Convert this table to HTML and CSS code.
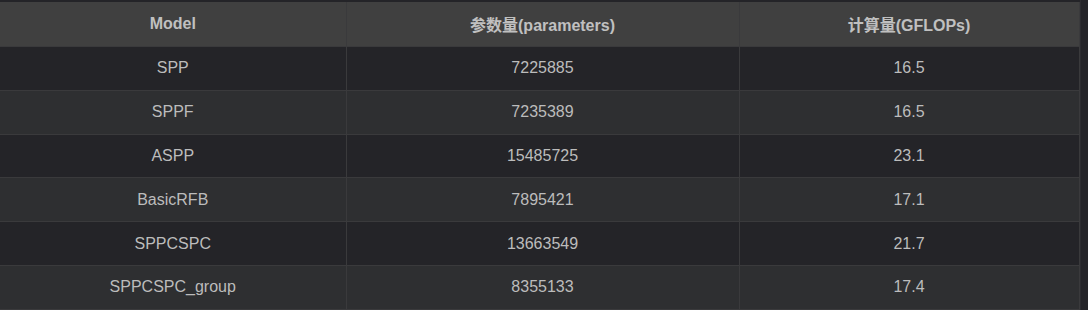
FILE: index.html
```html
<!DOCTYPE html>
<html>
<head>
<meta charset="utf-8">
<link rel="stylesheet" href="styles.css">
</head>
<body>
<div class="wrap">
<table class="tbl">
<colgroup><col class="c1"><col class="c2"><col class="c3"></colgroup>
<thead>
<tr><th>Model</th><th>参数量(parameters)</th><th>计算量(GFLOPs)</th></tr>
</thead>
<tbody>
<tr><td>SPP</td><td>7225885</td><td>16.5</td></tr>
<tr><td>SPPF</td><td>7235389</td><td>16.5</td></tr>
<tr><td>ASPP</td><td>15485725</td><td>23.1</td></tr>
<tr><td>BasicRFB</td><td>7895421</td><td>17.1</td></tr>
<tr><td>SPPCSPC</td><td>13663549</td><td>21.7</td></tr>
<tr><td>SPPCSPC_group</td><td>8355133</td><td>17.4</td></tr>
</tbody>
</table>
</div>
</body>
</html>
```
FILE: styles.css
```css
html, body {
  margin: 0;
  padding: 0;
  background: #242428;
}
.wrap {
  padding-top: 2px;
  width: 1080px;
  border-right: 1px solid #2c2c30;
}
.tbl {
  border-collapse: collapse;
  table-layout: fixed;
  width: 1079px;
  font-family: "Liberation Sans", Arial, "Noto Sans CJK SC", sans-serif;
  font-size: 16px;
  color: #bcbcbc;
}
.c1 { width: 346px; }
.c2 { width: 393px; }
.c3 { width: 340px; }
.tbl th, .tbl td {
  height: 42.8px;
  padding: 0 8px;
  text-align: center;
  border: 1px solid #3a3a3c;
  border-left: none;
  border-top: none;
  box-sizing: content-box;
}
.tbl th {
  height: 44px;
  background: #404040;
  font-weight: bold;
  color: #c0c0c0;
}
.tbl tbody tr:nth-child(odd) td { background: #242428; }
.tbl tbody tr:nth-child(even) td { background: #2e2f31; }
.tbl tr > *:last-child { border-right: 1px solid #3a3a3c; }
```
